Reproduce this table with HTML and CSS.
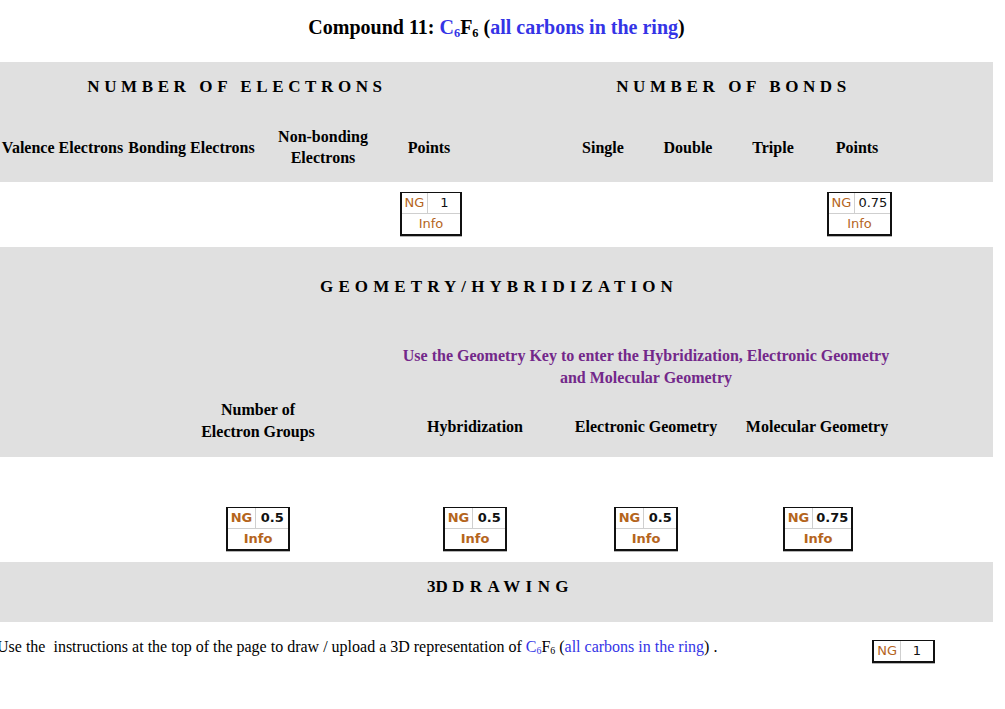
FILE: index.html
```html
<!DOCTYPE html>
<html>
<head>
<meta charset="utf-8">
<link rel="stylesheet" href="styles.css">
</head>
<body>
<div class="page">
  <h1 class="title">Compound 11: <span class="blue">C<sub>6</sub></span>F<sub>6</sub> (<span class="blue">all carbons in the ring</span>)</h1>

  <section class="band band-one grid-one">
    <div class="sec-head head-left">NUMBER OF ELECTRONS</div>
    <div class="sec-head head-right">NUMBER OF BONDS</div>
    <div class="colhd">Valence Electrons</div>
    <div class="colhd">Bonding Electrons</div>
    <div class="colhd">Non-bonding<br>Electrons</div>
    <div class="colhd">Points</div>
    <div class="colhd"></div>
    <div class="colhd">Single</div>
    <div class="colhd">Double</div>
    <div class="colhd">Triple</div>
    <div class="colhd">Points</div>
  </section>

  <section class="answers-one grid-one">
    <div class="cell c4">
      <div class="ng">
        <div class="ng-row"><span class="ng-l">NG</span><span class="ng-v">1</span></div>
        <div class="ng-info">Info</div>
      </div>
    </div>
    <div class="cell c9">
      <div class="ng">
        <div class="ng-row"><span class="ng-l">NG</span><span class="ng-v">0.75</span></div>
        <div class="ng-info">Info</div>
      </div>
    </div>
  </section>

  <section class="band band-two grid-two">
    <div class="sec-head head-full">GEOMETRY/HYBRIDIZATION</div>
    <div class="purple">Use the Geometry Key to enter the Hybridization, Electronic Geometry<br>and Molecular Geometry</div>
    <div class="colhd2 ga two">Number of<br>Electron Groups</div>
    <div class="colhd2 gb">Hybridization</div>
    <div class="colhd2 gc">Electronic Geometry</div>
    <div class="colhd2 gd">Molecular Geometry</div>
  </section>

  <section class="answers-two grid-two">
    <div class="cell ga">
      <div class="ng bold">
        <div class="ng-row"><span class="ng-l">NG</span><span class="ng-v">0.5</span></div>
        <div class="ng-info">Info</div>
      </div>
    </div>
    <div class="cell gb">
      <div class="ng bold">
        <div class="ng-row"><span class="ng-l">NG</span><span class="ng-v">0.5</span></div>
        <div class="ng-info">Info</div>
      </div>
    </div>
    <div class="cell gc">
      <div class="ng bold">
        <div class="ng-row"><span class="ng-l">NG</span><span class="ng-v">0.5</span></div>
        <div class="ng-info">Info</div>
      </div>
    </div>
    <div class="cell gd">
      <div class="ng bold">
        <div class="ng-row"><span class="ng-l">NG</span><span class="ng-v">0.75</span></div>
        <div class="ng-info">Info</div>
      </div>
    </div>
  </section>

  <section class="band band-three">
    <div class="draw-head">3D <span class="spaced">DRAWING</span></div>
  </section>

  <section class="bottom">
    <p class="instr">Use the&nbsp; instructions at the top of the page to draw / upload a 3D representation of <span class="blue">C<sub>6</sub></span>F<sub>6</sub> (<span class="blue">all carbons in the ring</span>) .</p>
    <div class="ng single">
      <div class="ng-row last"><span class="ng-l">NG</span><span class="ng-v">1</span></div>
    </div>
  </section>
</div>
</body>
</html>
```

FILE: styles.css
```css
html, body {
  margin: 0;
  padding: 0;
  background: #fff;
}
body {
  font-family: "Liberation Serif", "Times New Roman", serif;
  color: #000;
}
.page {
  width: 993px;
}
.title {
  margin: 0;
  height: 62px;
  box-sizing: border-box;
  padding-top: 14px;
  font-size: 20px;
  line-height: 26px;
  font-weight: bold;
  text-align: center;
}
.blue {
  color: #3434e6;
}
sub {
  font-size: 0.62em;
  vertical-align: -0.25em;
  line-height: 0;
}
.band {
  background: #e0e0e0;
}
.sec-head {
  font-weight: bold;
  font-size: 17px;
  letter-spacing: 4.6px;
  text-align: center;
  line-height: 20px;
}
.grid-one {
  display: grid;
  grid-template-columns: 125px 133px 130px 82px 90px 86px 84px 86px 82px 95px;
}
.band-one {
  height: 120px;
  grid-template-rows: 50px 70px;
}
.head-left {
  grid-column: 1 / 5;
  padding-top: 15px;
  padding-left: 4px;
}
.head-right {
  grid-column: 5 / 11;
  padding-top: 15px;
  padding-left: 4px;
}
.colhd {
  font-weight: bold;
  font-size: 16px;
  line-height: 21px;
  text-align: center;
  display: flex;
  align-items: center;
  justify-content: center;
  white-space: nowrap;
}
.answers-one {
  height: 65px;
  padding-top: 10px;
  box-sizing: border-box;
}
.cell {
  display: flex;
  justify-content: center;
  align-items: flex-start;
}
.c4 { grid-column: 4; padding-left: 4px; }
.c9 { grid-column: 9; padding-left: 5px; }

.grid-two {
  display: grid;
  grid-template-columns: 188px 140px 62px 170px 172px 170px 91px;
}
.band-two {
  height: 210px;
  grid-template-rows: 80px 72px 58px;
}
.head-full {
  grid-column: 1 / 8;
  grid-row: 1;
  padding-top: 30px;
  letter-spacing: 5.1px;
  padding-left: 5px;
}
.purple {
  grid-column: 4 / 7;
  grid-row: 2;
  padding-top: 18px;
  color: #73288a;
  font-weight: bold;
  font-size: 16px;
  line-height: 22px;
  text-align: center;
  white-space: nowrap;
}
.colhd2 {
  grid-row: 3;
  font-weight: bold;
  font-size: 16px;
  line-height: 22px;
  text-align: center;
  padding-top: 17px;
  white-space: nowrap;
}
.colhd2.two {
  padding-top: 0;
}
.ga { grid-column: 2; }
.gb { grid-column: 4; }
.gc { grid-column: 5; }
.gd { grid-column: 6; }

.answers-two {
  height: 105px;
  padding-top: 50px;
  box-sizing: border-box;
}
.answers-two .cell {
  grid-row: 1;
}
.answers-two .gd {
  padding-left: 2px;
}

.band-three {
  height: 60px;
  padding-top: 14px;
  box-sizing: border-box;
}
.draw-head {
  text-align: center;
  font-weight: bold;
  font-size: 17px;
  line-height: 22px;
  padding-left: 8px;
}
.spaced {
  letter-spacing: 5.4px;
}

.bottom {
  display: flex;
  justify-content: space-between;
  align-items: flex-start;
  padding-right: 58px;
  height: 87px;
  box-sizing: border-box;
}
.instr {
  margin: 14px 0 0 -3px;
  font-size: 16px;
  line-height: 22px;
}
.single {
  margin-top: 18px;
}

/* NG grading widget */
.ng {
  display: inline-flex;
  flex-direction: column;
  border: 2px solid #111;
  border-top-width: 1px;
  font-family: "DejaVu Sans", Verdana, sans-serif;
  font-size: 13px;
  background: #fff;
  box-shadow: 0 1px 0 #b5b5b5;
}
.ng-row {
  display: flex;
  height: 20px;
  line-height: 20px;
  border-bottom: 1px solid #cfcfcf;
}
.ng-row.last {
  border-bottom: none;
}
.ng-l {
  color: #b5651d;
  padding: 0 3px;
  border-right: 1px solid #cfcfcf;
}
.ng-v {
  min-width: 26px;
  padding: 0 3px;
  text-align: center;
  color: #111;
}
.ng-info {
  height: 20px;
  line-height: 20px;
  text-align: center;
  color: #b5651d;
}
.ng.bold {
  font-weight: bold;
}
```
